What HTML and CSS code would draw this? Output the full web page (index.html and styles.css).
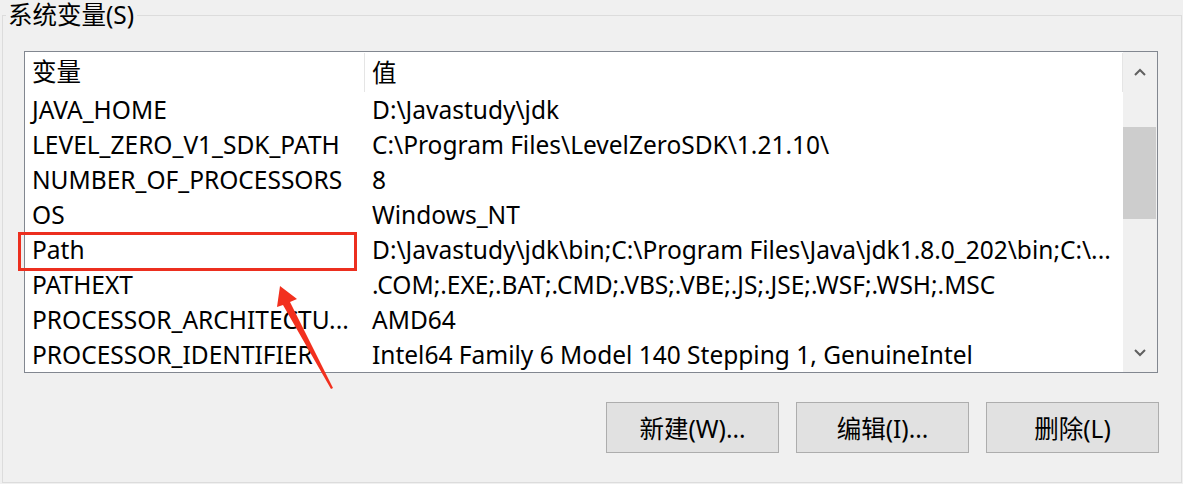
FILE: index.html
```html
<!DOCTYPE html>
<html lang="zh-CN">
<head>
<meta charset="utf-8">
<title>系统变量</title>
<link rel="stylesheet" href="styles.css">
</head>
<body>
<div class="group">
  <div class="group-title"><span>系统变量(S)</span></div>
  <div class="listview">
    <div class="table">
      <div class="row header">
        <div class="cell name">变量</div>
        <div class="cell value">值</div>
      </div>
      <div class="row"><div class="cell name">JAVA_HOME</div><div class="cell value">D:\Javastudy\jdk</div></div>
      <div class="row"><div class="cell name">LEVEL_ZERO_V1_SDK_PATH</div><div class="cell value">C:\Program Files\LevelZeroSDK\1.21.10\</div></div>
      <div class="row"><div class="cell name">NUMBER_OF_PROCESSORS</div><div class="cell value">8</div></div>
      <div class="row"><div class="cell name">OS</div><div class="cell value">Windows_NT</div></div>
      <div class="row"><div class="cell name">Path</div><div class="cell value">D:\Javastudy\jdk\bin;C:\Program Files\Java\jdk1.8.0_202\bin;C:\...</div></div>
      <div class="row"><div class="cell name">PATHEXT</div><div class="cell value">.COM;.EXE;.BAT;.CMD;.VBS;.VBE;.JS;.JSE;.WSF;.WSH;.MSC</div></div>
      <div class="row"><div class="cell name">PROCESSOR_ARCHITECTU...</div><div class="cell value">AMD64</div></div>
      <div class="row"><div class="cell name">PROCESSOR_IDENTIFIER</div><div class="cell value">Intel64 Family 6 Model 140 Stepping 1, GenuineIntel</div></div>
    </div>
    <div class="scrollbar">
      <div class="sb-btn sb-up">
        <svg width="12" height="8" viewBox="0 0 12 8"><path d="M1 7 L6 2 L11 7" fill="none" stroke="#606060" stroke-width="2"/></svg>
      </div>
      <div class="sb-track"><div class="sb-thumb"></div></div>
      <div class="sb-btn sb-down">
        <svg width="12" height="8" viewBox="0 0 12 8"><path d="M1 1 L6 6 L11 1" fill="none" stroke="#606060" stroke-width="2"/></svg>
      </div>
    </div>
  </div>
  <div class="buttons">
    <button class="btn">新建(W)...</button>
    <button class="btn">编辑(I)...</button>
    <button class="btn">删除(L)</button>
  </div>
</div>
<div class="highlight"></div>
<svg class="arrow" width="1183" height="484" viewBox="0 0 1183 484">
  <polygon points="280,286 297,299 290,302 333,388 331,389 283,305 277,307" fill="#f2301e"/>
</svg>
</body>
</html>
```
FILE: styles.css
```css
html, body {
  margin: 0;
  padding: 0;
  background: #f0f0f0;
  width: 1183px;
  height: 484px;
  overflow: hidden;
}
body {
  position: relative;
  font-family: "Noto Sans", "Noto Sans CJK SC", sans-serif;
  font-size: 24.5px;
  color: #000;
}
.group {
  margin: 15px 0 0 2px;
  width: 1180px;
  height: 468px;
  box-sizing: border-box;
  border: 1px solid #dcdcdc;
}
.group-title {
  margin: -16px 0 0 3px;
  height: 30px;
  line-height: 30px;
}
.group-title span {
  background: #f0f0f0;
  padding: 0 3px 0 2px;
}
.listview {
  margin: 21px 0 0 21px;
  width: 1134px;
  height: 322px;
  box-sizing: border-box;
  border: 1px solid #828790;
  background: #fff;
  display: flex;
}
.table {
  flex: 1;
  display: flex;
  flex-direction: column;
}
.row {
  display: flex;
  height: 35px;
  line-height: 35px;
  white-space: nowrap;
}
.row.header {
  height: 40px;
  line-height: 40px;
}
.cell.name {
  width: 332px;
  padding-left: 7px;
}
.cell.value {
  padding-left: 8px;
}
.header .cell.value {
  flex: 1;
  border-left: 1px solid #e5e5e5;
  border-right: 1px solid #e5e5e5;
  margin: 1px 0 0 0;
  padding-left: 7px;
}
.scrollbar {
  width: 34px;
  background: #f0f0f0;
  display: flex;
  flex-direction: column;
}
.sb-btn {
  display: flex;
  align-items: center;
  justify-content: center;
}
.sb-up { height: 40px; }
.sb-down { height: 38px; }
.sb-track { flex: 1; }
.sb-thumb {
  margin-top: 35px;
  width: 33px;
  height: 92px;
  background: #cdcdcd;
}
.buttons {
  display: flex;
  justify-content: flex-end;
  gap: 17px;
  margin: 29px 0 0 0;
  padding-right: 22px;
}
.btn {
  width: 173px;
  height: 51px;
  box-sizing: border-box;
  background: #e1e1e1;
  border: 1px solid #adadad;
  font-family: "Noto Sans", "Noto Sans CJK SC", sans-serif;
  font-size: 24.5px;
  color: #000;
  padding: 0;
}
.highlight {
  position: absolute;
  left: 18px;
  top: 232px;
  width: 339px;
  height: 39px;
  box-sizing: border-box;
  border: 3px solid #ec2f1f;
}
.arrow {
  position: absolute;
  left: 0;
  top: 0;
}
```
